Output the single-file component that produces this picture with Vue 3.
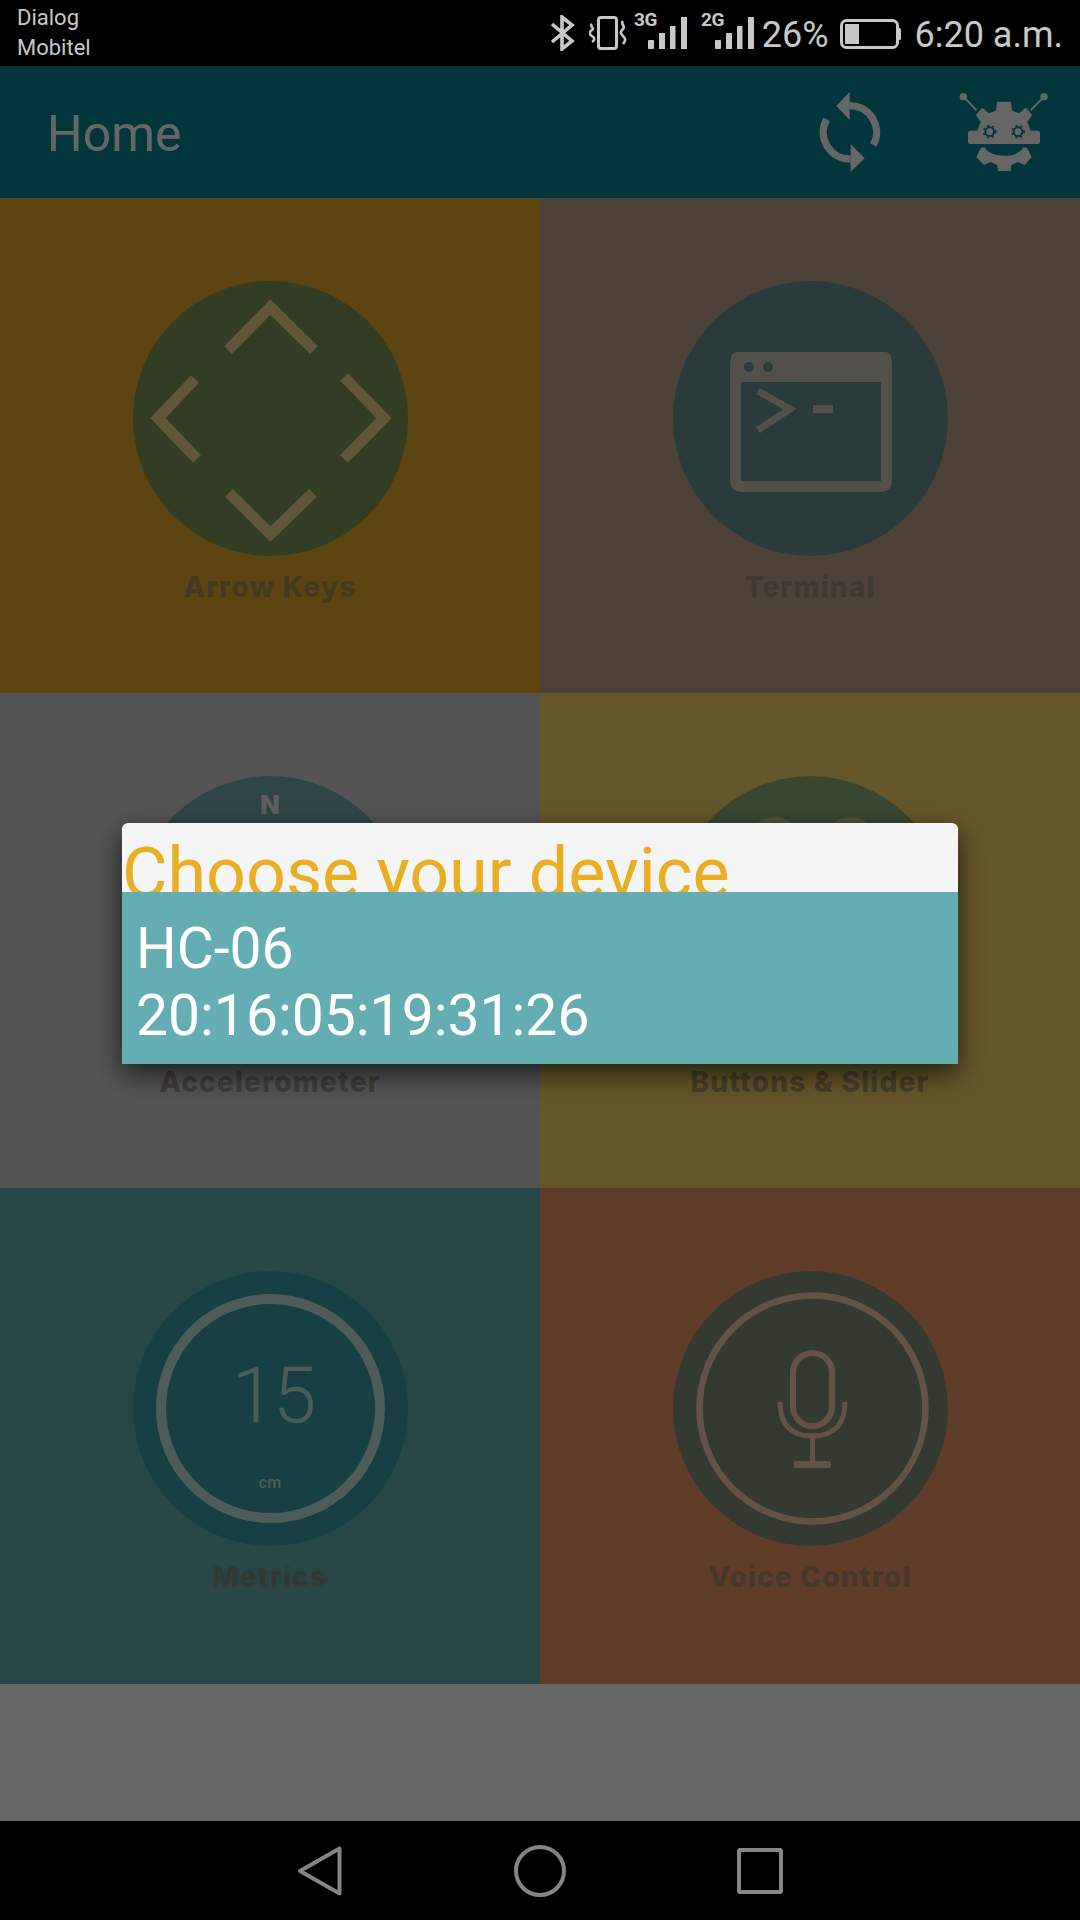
<template>
  <div class="phone">
    <header class="status-bar">
      <div class="carriers">
        <span>Dialog</span>
        <span>Mobitel</span>
      </div>
      <div class="status-icons">
        <svg class="ic-bt" width="25" height="36" viewBox="0 0 25 36">
          <path d="M2 9 22 26 12 34V2L22 10 2 27" fill="none" stroke="#c8c8c8" stroke-width="3.6" />
        </svg>
        <svg class="ic-vib" width="38" height="34" viewBox="0 0 38 34">
          <rect x="9.500" y="1.500" width="18" height="31" rx="2.500" fill="none" stroke="#c8c8c8" stroke-width="3" />
          <path d="M3 8C0 10 6 12 3 14S0 18 3 20 6 24 3 26M34 5C31 8 37 10 34 13S31 17 34 20 37 24 34 28" fill="none" stroke="#c8c8c8" stroke-width="2.600" />
        </svg>
        <svg v-for="net in networks" :key="net" class="ic-signal" width="53" height="38" viewBox="0 0 53 38">
          <text x="0" y="14" class="net-label">{{ net }}</text>
          <rect x="14" y="28" width="6" height="9" rx="1" />
          <rect x="25" y="21" width="6" height="16" />
          <rect x="36" y="14" width="5.500" height="23" />
          <rect x="47" y="5" width="6" height="32" />
        </svg>
        <span class="battery-text">26%</span>
        <svg class="ic-battery" width="61" height="30" viewBox="0 0 61 30">
          <rect x="1.500" y="1.500" width="56" height="27" rx="5" fill="none" stroke="#c8c8c8" stroke-width="3" />
          <rect x="5" y="5" width="14" height="20" fill="#c8c8c8" />
          <path d="M58 9h1.500a1.500 1.500 0 0 1 1.500 1.500v9a1.500 1.500 0 0 1-1.500 1.500H58z" fill="#c8c8c8" />
        </svg>
        <span class="clock">6:20 a.m.</span>
      </div>
    </header>

    <main class="screen">
      <div class="app-bar">
        <span class="app-title">Home</span>
        <svg class="ic-sync" width="65" height="85" viewBox="110 60 195 255">
          <path d="M205 107A80 80 0 0 1 276 225M136 148A80 80 0 0 0 208 267" fill="none" stroke="#fff" stroke-width="22" />
          <path d="M205 65 165 108 205 150ZM208 222 250 265 208 305Z" fill="#fff" />
        </svg>
        <svg class="ic-robot" width="89" height="80" viewBox="535 66 267 240">
          <circle cx="548" cy="80" r="11" fill="#fff" />
          <circle cx="790" cy="80" r="11" fill="#fff" />
          <path d="M548 80 587 120M790 80 751 120" stroke="#fff" stroke-width="6" />
          <path d="M650 95H690L695 122 715 130 735 113 755 135 740 155 750 182H770Q778 182 778 190V215Q778 222 770 222H570Q562 222 562 215V190Q562 182 570 182H590L600 155 585 135 605 113 625 130 645 122Z" fill="#fff" />
          <path d="M600 234 612 232C628 266 712 266 728 232L740 234 753 262 732 285 712 276 692 285 690 303H652L650 285 630 276 610 285 587 262Z" fill="#fff" />
          <g fill="#fff" stroke="#058796">
            <circle cx="627" cy="185" r="13" stroke-width="6" />
            <circle cx="712" cy="185" r="13" stroke-width="6" />
          </g>
          <g fill="none" stroke="#058796" stroke-width="5" stroke-dasharray="6 9">
            <circle cx="627" cy="185" r="18" />
            <circle cx="712" cy="185" r="18" />
          </g>
        </svg>
      </div>

      <div class="tile-grid">
        <div
          v-for="tile in tiles"
          :key="tile.name"
          class="tile"
          :class="tile.key"
        >
          <div class="tile-circle">
            <svg v-if="tile.key === 'arrows'" width="275" height="275" viewBox="0 0 275 275">
              <path
                d="M95 69 137.500 26 181 69M62 98 25 137 64 178M211 96 251 137 211 178M96 212 137.500 253 180 212"
                fill="none"
                stroke="#f5d791"
                stroke-width="11"
              />
            </svg>
            <svg v-else-if="tile.key === 'terminal'" width="275" height="275" viewBox="0 0 275 275">
              <rect x="62.500" y="76.500" width="151" height="129" rx="5" fill="none" stroke="#d2c8bc" stroke-width="11" />
              <rect x="58" y="71" width="160" height="30" rx="6" fill="#d2c8bc" />
              <circle cx="76" cy="86" r="5" fill="#669694" />
              <circle cx="95" cy="86" r="5" fill="#669694" />
              <path d="M85 110 117 128 85 149" fill="none" stroke="#d2c8bc" stroke-width="7" />
              <rect x="140" y="124" width="20" height="8" fill="#d2c8bc" />
            </svg>
            <span v-else-if="tile.key === 'accel'" class="compass-n">N</span>
            <svg v-else-if="tile.key === 'buttons'" width="275" height="275" viewBox="0 0 275 275">
              <circle cx="102" cy="68" r="27" fill="#ffe0a0" opacity="0.55" />
              <circle cx="177" cy="68" r="27" fill="#ffe0a0" opacity="0.55" />
            </svg>
            <div v-else-if="tile.key === 'metrics'" class="gauge">
              <span class="gauge-value">15</span>
              <span class="gauge-unit">cm</span>
            </div>
            <svg v-else width="275" height="275" viewBox="0 0 275 275">
              <circle cx="139.500" cy="137.500" r="113" fill="none" stroke="#ffcdaa" stroke-width="6.500" />
              <rect x="120" y="82" width="39" height="73" rx="19.500" fill="none" stroke="#ffcdaa" stroke-width="6" />
              <path d="M107 131C107 150 115 165 139.500 165S172 150 172 131M139.500 165V190" fill="none" stroke="#ffcdaa" stroke-width="5" />
              <rect x="121" y="190" width="37" height="7" rx="2" fill="#ffcdaa" />
            </svg>
          </div>
          <span class="tile-label">{{ tile.name }}</span>
        </div>
      </div>

      <div class="screen-foot"></div>

      <div class="dim"></div>

      <div class="device-dialog">
        <div class="dialog-head">Choose your device</div>
        <div class="device-row">
          <span>HC-06</span>
          <span>20:16:05:19:31:26</span>
        </div>
      </div>
    </main>

    <footer class="nav-bar">
      <svg width="46" height="52" viewBox="0 0 46 52">
        <path d="M42.500 3.500V48.500L3 26Z" fill="none" stroke="#858585" stroke-width="4" stroke-linejoin="round" />
      </svg>
      <span class="nav-home"></span>
      <span class="nav-recent"></span>
    </footer>
  </div>
</template>

<script setup>
const networks = ['3G', '2G']

const tiles = [
  { key: 'arrows', name: 'Arrow Keys' },
  { key: 'terminal', name: 'Terminal' },
  { key: 'accel', name: 'Accelerometer' },
  { key: 'buttons', name: 'Buttons & Slider' },
  { key: 'metrics', name: 'Metrics' },
  { key: 'voice', name: 'Voice Control' }
]
</script>

<style>
html,
body {
  margin: 0;
  background: #000;
}
</style>

<style scoped>
.phone {
  width: 1080px;
  height: 1920px;
  display: flex;
  flex-direction: column;
  overflow: hidden;
  background: #000;
  font-family: Roboto, "Liberation Sans", sans-serif;
}

.status-bar {
  height: 66px;
  flex: none;
  display: flex;
  justify-content: space-between;
  align-items: center;
  padding: 0 17px 0 17px;
  color: #c8c8c8;
}

.carriers {
  display: flex;
  flex-direction: column;
  font-size: 22px;
  line-height: 30px;
}

.status-icons {
  display: flex;
  align-items: center;
}

.ic-vib {
  margin-left: 14px;
}

.ic-signal {
  margin-left: 7px;
  margin-top: -4px;
  fill: #c8c8c8;
  overflow: visible;
}

.ic-signal + .ic-signal {
  margin-left: 14px;
}

.net-label {
  font-size: 19px;
  font-weight: 700;
  font-family: Roboto, sans-serif;
  letter-spacing: -0.5px;
}

.battery-text {
  margin-left: 8px;
  margin-top: 3px;
  font-size: 36px;
}

.ic-battery {
  margin-left: 11px;
  margin-top: 2px;
}

.clock {
  margin-left: 14px;
  margin-top: 3px;
  font-size: 36px;
}

.screen {
  flex: 1;
  position: relative;
  display: flex;
  flex-direction: column;
  background: #fff;
}

.app-bar {
  height: 132px;
  flex: none;
  display: flex;
  align-items: center;
  padding-left: 47px;
  background: #058796;
  color: #fff;
}

.app-title {
  font-size: 50px;
  margin-top: 3px;
  margin-right: auto;
}

.ic-sync {
  margin-right: 76px;
}

.ic-robot {
  margin-right: 32px;
}

.tile-grid {
  display: grid;
  grid-template-columns: 540px 540px;
  grid-template-rows: 495px 495px 496px;
}

.tile {
  display: flex;
  flex-direction: column;
  align-items: center;
  padding-top: 83px;
  box-sizing: border-box;
}

.tile-circle {
  width: 275px;
  height: 275px;
  flex: none;
  border-radius: 50%;
  display: flex;
  flex-direction: column;
  align-items: center;
}

.tile-label {
  margin-top: 15px;
  font-family: Inter, sans-serif;
  font-weight: 800;
  font-size: 28px;
  letter-spacing: 1.2px;
  line-height: 32px;
  color: rgba(140, 130, 110, 0.7);
}

.arrows { background: #e6ac28; }
.arrows .tile-circle { background: #7d985a; }
.terminal { background: #c3a58c; }
.terminal .tile-circle { background: #669694; }
.accel { background: #d2d2d2; }
.accel .tile-circle { background: #73afb4; }
.buttons { background: #ffd76b; }
.buttons .tile-circle { background: #8eb27a; }
.metrics { background: #64afb4; }
.metrics .tile-circle { background: #3ca0aa; }
.voice { background: #ee9966; }
.voice .tile-circle { background: #829178; }

.compass-n {
  margin-top: 14px;
  font-size: 26px;
  line-height: 30px;
  font-weight: 800;
  color: #f0f0f0;
  font-family: Inter, sans-serif;
}

.gauge {
  width: 229px;
  height: 229px;
  margin-top: 23px;
  box-sizing: border-box;
  border: 10px solid #c0e6e1;
  border-radius: 50%;
  display: flex;
  flex-direction: column;
  align-items: center;
  color: #c0e6e1;
  font-family: Roboto, sans-serif;
}

.gauge-value {
  margin-top: 47px;
  margin-left: 6px;
  font-size: 78px;
  font-weight: 300;
  letter-spacing: -2px;
  line-height: 90px;
}

.gauge-unit {
  margin-top: 33px;
  font-size: 16px;
  line-height: 18px;
  font-weight: 500;
}

.screen-foot {
  flex: 1;
  background: #fff;
}

.dim {
  position: absolute;
  inset: 0;
  background: rgba(0, 0, 0, 0.6);
}

.device-dialog {
  position: absolute;
  left: 122px;
  top: 757px;
  width: 836px;
  border-radius: 6px 6px 0 0;
  box-shadow: 0 10px 28px rgba(0, 0, 0, 0.65);
}

.dialog-head {
  height: 69px;
  overflow: hidden;
  border-radius: 6px 6px 0 0;
  background: #f5f5f5;
  color: #e8ae24;
  font-size: 70px;
  line-height: 101px;
  white-space: nowrap;
}

.device-row {
  height: 172px;
  box-sizing: border-box;
  padding: 24px 14px 16px;
  display: flex;
  flex-direction: column;
  justify-content: center;
  background: #64aeb3;
  color: #fff;
  font-size: 57px;
  line-height: 67px;
}

.nav-bar {
  height: 99px;
  flex: none;
  display: flex;
  justify-content: center;
  align-items: center;
  gap: 171px;
  background: #000;
}

.nav-home {
  width: 52px;
  height: 52px;
  box-sizing: border-box;
  border: 4.5px solid #858585;
  border-radius: 50%;
}

.nav-recent {
  width: 46px;
  height: 46px;
  box-sizing: border-box;
  border: 4px solid #858585;
  border-radius: 3px;
}
</style>
